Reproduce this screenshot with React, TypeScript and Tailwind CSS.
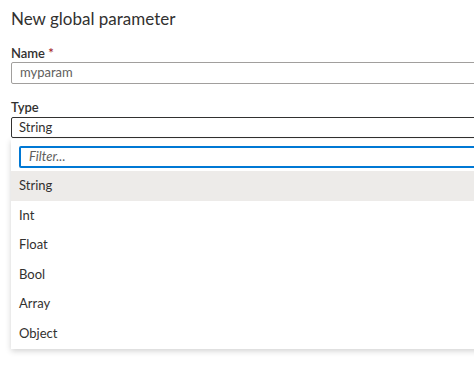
const options = ["String", "Int", "Float", "Bool", "Array", "Object"];

const App = () => {
  return (
    <div
      className="w-[474px] h-[379px] bg-white overflow-hidden text-[#323130]"
      style={{ fontFamily: 'Lato, "Noto Sans", sans-serif' }}
    >
      <div className="w-[520px] pl-[11px] pt-[6px]">
        <h1 className="text-[17px] leading-[26px] font-normal">New global parameter</h1>

        {/* Name */}
        <div className="mt-[12px] text-[13px] leading-[18px] font-semibold">
          Name <span className="text-[#a4262c]">*</span>
        </div>
        <div className="h-[22px] border border-[#a19f9d] rounded-[2px] px-[8px] flex items-center text-[13px] text-[#605e5c]">
          myparam
        </div>

        {/* Type */}
        <div className="mt-[14px] text-[13px] leading-[18px] font-semibold">Type</div>
        <div className="mt-px h-[21px] border border-[#323130] rounded-[2px] px-[7px] flex items-center text-[13px]">
          String
        </div>

        {/* Dropdown */}
        <div className="mt-px bg-white shadow-[0_2px_6px_rgba(0,0,0,0.18)]">
          <div className="pt-[7px] pb-[3px] pl-[8px]">
            <div className="h-[22px] border-2 border-[#0078d4] rounded-[2px] pl-[8px] flex items-center text-[13px] italic text-[#605e5c]">
              Filter...
            </div>
          </div>
          {options.map((o, i) => (
            <div
              key={o}
              className={
                "h-[29.6px] flex items-center pl-[8px] text-[13px] " + (i === 0 ? "bg-[#edebe9]" : "")
              }
            >
              {o}
            </div>
          ))}
        </div>
      </div>
    </div>
  );
};

export default App;
